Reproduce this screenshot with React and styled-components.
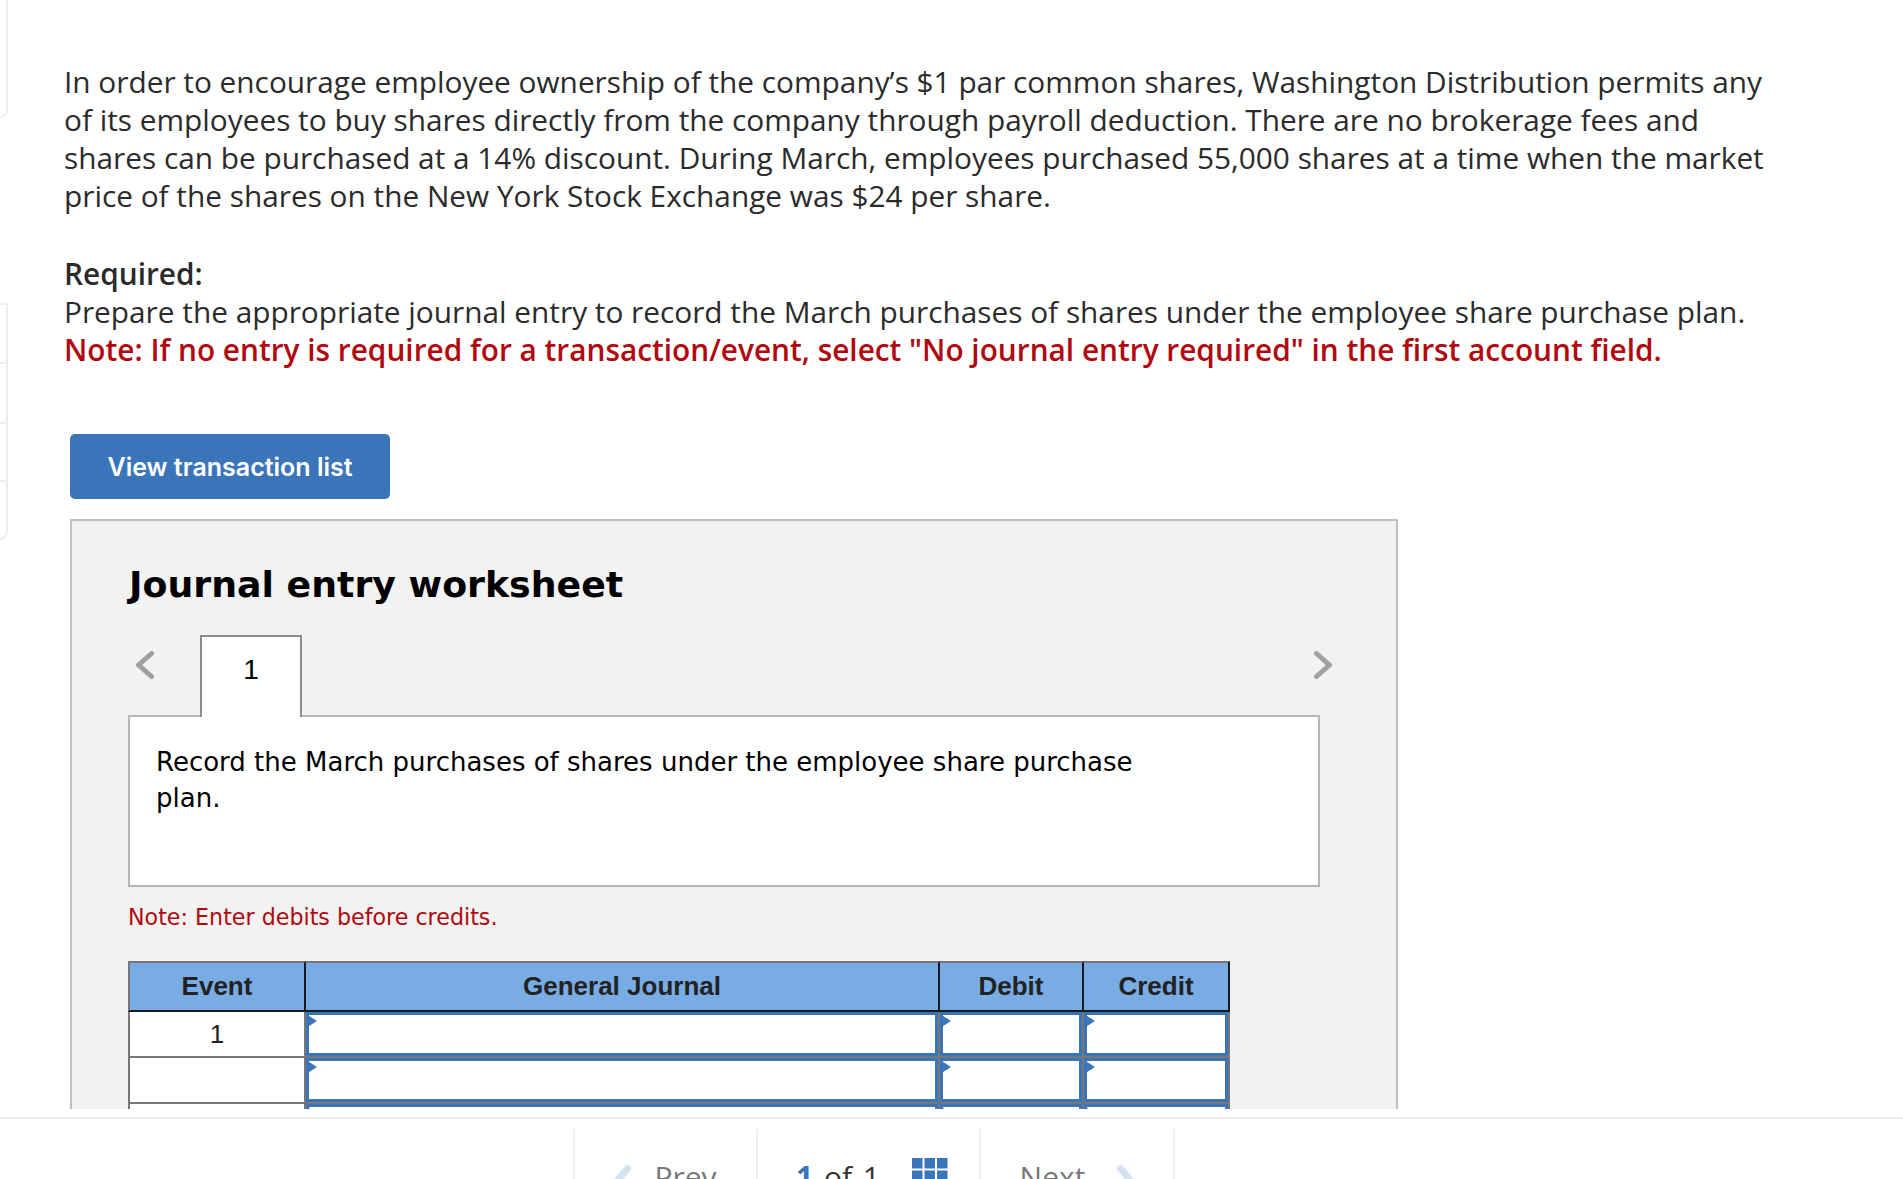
import React from "react";
import styled, { createGlobalStyle } from "styled-components";

const GlobalStyle = createGlobalStyle`
  html, body {
    margin: 0;
    padding: 0;
    height: 100%;
    overflow: hidden;
    background: #fff;
  }
`;

const Page = styled.div`
  width: 1903px;
  height: 1179px;
  overflow: hidden;
  display: flex;
  flex-direction: column;
`;

const Scroller = styled.div`
  height: 1109px;
  flex: none;
  overflow: hidden;
  display: flex;
`;

const Rail = styled.div`
  width: 8px;
  flex: none;
  display: flex;
  flex-direction: column;
`;

const RailCard = styled.div`
  box-sizing: border-box;
  width: 8px;
  height: ${({ $height }) => $height}px;
  margin-top: ${({ $top }) => $top}px;
  border: 2px solid #eeeeee;
  border-left: 0;
  border-top: ${({ $open }) => ($open ? "0" : "2px solid #eeeeee")};
  border-bottom-right-radius: ${({ $round }) => ($round ? "8px" : "0")};
`;

const Main = styled.main`
  flex: 1;
  padding: 63px 0 0 56px;
`;

const Prose = styled.p`
  margin: 0;
  width: 1722px;
  font-family: "Open Sans", sans-serif;
  font-size: 29.8px;
  line-height: 38px;
  color: #2b2b2b;
`;

const Strong = styled.strong`
  display: block;
  font-weight: 600;
  margin-top: 40px;
`;

const RedNote = styled.strong`
  display: block;
  font-weight: 600;
  color: #b0090f;
`;

const ListButton = styled.button`
  display: block;
  margin: 65px 0 0 6px;
  width: 320px;
  height: 65px;
  border: 0;
  border-radius: 5px;
  background: #3b75b9;
  color: #fff;
  font-family: "Inter", sans-serif;
  font-size: 25px;
  font-weight: 600;
  cursor: pointer;
`;

const Worksheet = styled.section`
  box-sizing: border-box;
  margin: 20px 0 0 6px;
  width: 1328px;
  height: 800px;
  border: 2px solid #c0c0c0;
  background: #f2f2f2;
  padding: 39px 56px 0;
  font-family: "DejaVu Sans", sans-serif;
`;

const Title = styled.h2`
  margin: 0 0 0 1px;
  font-size: 36.3px;
  line-height: 50px;
  font-weight: 700;
  color: #000;
`;

const TabRow = styled.div`
  display: flex;
  align-items: flex-start;
  height: 80px;
  margin-top: 25px;
  width: 1204px;
  position: relative;
  z-index: 1;
`;

const Arrow = styled.button`
  border: 0;
  background: none;
  padding: 0;
  width: 18px;
  height: 28px;
  margin: 16px 0 0 ${({ $inset }) => $inset}px;
  flex: none;
`;

const Tab = styled.div`
  box-sizing: border-box;
  width: 102px;
  height: 82px;
  margin-left: 46px;
  border: 2px solid #8c8c8c;
  border-bottom: 0;
  background: #fff;
  text-align: center;
  font-family: "Liberation Sans", sans-serif;
  font-size: 28px;
  line-height: 66px;
  color: #000;
  margin-right: auto;
`;

const Prompt = styled.div`
  box-sizing: border-box;
  width: 1192px;
  height: 172px;
  border: 2px solid #b5b5b5;
  background: #fff;
  padding: 27px 26px;
  font-size: 26px;
  line-height: 36px;
  color: #000;
`;

const PromptText = styled.p`
  margin: 0;
  width: 1000px;
`;

const EnterNote = styled.p`
  margin: 15px 0 0;
  font-size: 22.2px;
  line-height: 30px;
  color: #b0090f;
`;

const Grid = styled.div`
  margin-top: 29px;
  width: 1101px;
  display: grid;
  grid-template-columns: 178px 634px 144px 146px;
  font-family: "Liberation Sans", sans-serif;
`;

const Head = styled.div`
  box-sizing: border-box;
  height: 51px;
  background: #79ace4;
  border-top: 2px solid #777;
  border-bottom: 2px solid #1a1a1a;
  border-right: 2px solid #1a1a1a;
  border-left: ${({ $first }) => ($first ? "2px solid #777" : "0")};
  text-align: center;
  font-size: 26px;
  font-weight: 700;
  line-height: 47px;
  color: #222;
`;

const EventCell = styled.div`
  box-sizing: border-box;
  height: 46px;
  background: #fff;
  border-left: 2px solid #777;
  border-right: 2px solid #777;
  border-bottom: 2px solid #777;
  text-align: center;
  font-size: 26px;
  line-height: 44px;
  color: #222;
`;

const EntryCell = styled.div`
  box-sizing: border-box;
  height: 46px;
  border-right: 2px solid #777;
  border-bottom: 2px solid #777;
`;

const EntryInput = styled.div`
  position: relative;
  box-sizing: border-box;
  height: 100%;
  background: #fff;
  border: 3px solid #3b75b9;
  &::before {
    content: "";
    position: absolute;
    left: -3px;
    top: -1px;
    border-left: 11px solid #3b75b9;
    border-top: 7px solid transparent;
    border-bottom: 7px solid transparent;
  }
`;

const Footer = styled.footer`
  flex: 1;
  margin-top: 8px;
  border-top: 2px solid #eeeeee;
  display: flex;
  justify-content: center;
  padding-top: 10px;
  padding-right: 155px;
  font-family: "Open Sans", sans-serif;
  font-size: 30px;
`;

const Pager = styled.div`
  display: flex;
  height: 100px;
  border-left: 2px solid #eeeeee;
`;

const PagerCell = styled.div`
  box-sizing: border-box;
  width: ${({ $width }) => $width}px;
  border-right: 2px solid #eeeeee;
  display: flex;
  justify-content: center;
  align-items: flex-start;
  gap: ${({ $gap }) => $gap}px;
  padding: 29px ${({ $right = 0 }) => $right}px 0 ${({ $left = 0 }) => $left}px;
  color: #777;
  line-height: 30px;
`;

const PagerLabel = styled.span`
  margin-top: 4px;
`;

const ChevronSlot = styled.span`
  margin-top: 7px;
  line-height: 0;
`;

const PageNumbers = styled.span`
  margin-top: 4px;
  color: #333;
  word-spacing: 3px;
`;

const Current = styled.b`
  color: #3b75b9;
`;

const Chevron = ({ dir, color, width, height, stroke }) => (
  <svg width={width} height={height} viewBox={`0 0 ${width} ${height}`} fill="none">
    <path
      d={
        dir === "left"
          ? `M${width - stroke / 2} ${stroke / 2} ${stroke / 2} ${height / 2} ${width - stroke / 2} ${height - stroke / 2}`
          : `M${stroke / 2} ${stroke / 2} ${width - stroke / 2} ${height / 2} ${stroke / 2} ${height - stroke / 2}`
      }
      stroke={color}
      strokeWidth={stroke}
      strokeLinecap="round"
      strokeLinejoin="round"
    />
  </svg>
);

const GridIcon = () => (
  <svg width="36" height="36" viewBox="0 0 36 36" fill="#3b75b9">
    {[0, 12.5, 25].map((x) =>
      [0, 12.5, 25].map((y) => (
        <rect key={`${x}-${y}`} x={x} y={y} width="10.5" height="10.5" />
      ))
    )}
  </svg>
);

const rows = ["1", "", ""];

export default function App() {
  return (
    <>
      <GlobalStyle />
      <Page>
        <Scroller>
          <Rail>
            <RailCard $open $round $height={118} $top={0} />
            <RailCard $height={61} $top={185} />
            <RailCard $open $height={60} $top={0} />
            <RailCard $open $height={58} $top={0} />
            <RailCard $open $round $height={58} $top={0} />
          </Rail>
          <Main>
            <Prose>
              In order to encourage employee ownership of the company’s $1 par common shares,
              Washington Distribution permits any of its employees to buy shares directly from the
              company through payroll deduction. There are no brokerage fees and shares can be
              purchased at a 14% discount. During March, employees purchased 55,000 shares at a
              time when the market price of the shares on the New York Stock Exchange was $24 per
              share.
            </Prose>
            <Prose>
              <Strong>Required:</Strong>
              Prepare the appropriate journal entry to record the March purchases of shares under
              the employee share purchase plan.
              <RedNote>
                Note: If no entry is required for a transaction/event, select "No journal entry
                required" in the first account field.
              </RedNote>
            </Prose>
            <ListButton>View transaction list</ListButton>
            <Worksheet>
              <Title>Journal entry worksheet</Title>
              <TabRow>
                <Arrow $inset={8}>
                  <Chevron dir="left" color="#a0a0a0" width={18} height={28} stroke={5} />
                </Arrow>
                <Tab>1</Tab>
                <Arrow $inset={0}>
                  <Chevron dir="right" color="#a0a0a0" width={18} height={28} stroke={5} />
                </Arrow>
              </TabRow>
              <Prompt>
                <PromptText>
                  Record the March purchases of shares under the employee share purchase plan.
                </PromptText>
              </Prompt>
              <EnterNote>Note: Enter debits before credits.</EnterNote>
              <Grid>
                <Head $first>Event</Head>
                <Head>General Journal</Head>
                <Head>Debit</Head>
                <Head>Credit</Head>
                {rows.map((event, i) => (
                  <React.Fragment key={i}>
                    <EventCell>{event}</EventCell>
                    <EntryCell>
                      <EntryInput />
                    </EntryCell>
                    <EntryCell>
                      <EntryInput />
                    </EntryCell>
                    <EntryCell>
                      <EntryInput />
                    </EntryCell>
                  </React.Fragment>
                ))}
              </Grid>
            </Worksheet>
          </Main>
        </Scroller>
        <Footer>
          <Pager>
            <PagerCell $width={183} $gap={23} $right={4}>
              <ChevronSlot>
                <Chevron dir="left" color="#d5e2f1" width={21} height={40} stroke={7} />
              </ChevronSlot>
              <PagerLabel>Prev</PagerLabel>
            </PagerCell>
            <PagerCell $width={223} $gap={32} $left={7}>
              <PageNumbers>
                <Current>1</Current> of 1
              </PageNumbers>
              <GridIcon />
            </PagerCell>
            <PagerCell $width={194} $gap={32} $left={4}>
              <PagerLabel>Next</PagerLabel>
              <ChevronSlot>
                <Chevron dir="right" color="#d5e2f1" width={21} height={40} stroke={7} />
              </ChevronSlot>
            </PagerCell>
          </Pager>
        </Footer>
      </Page>
    </>
  );
}
